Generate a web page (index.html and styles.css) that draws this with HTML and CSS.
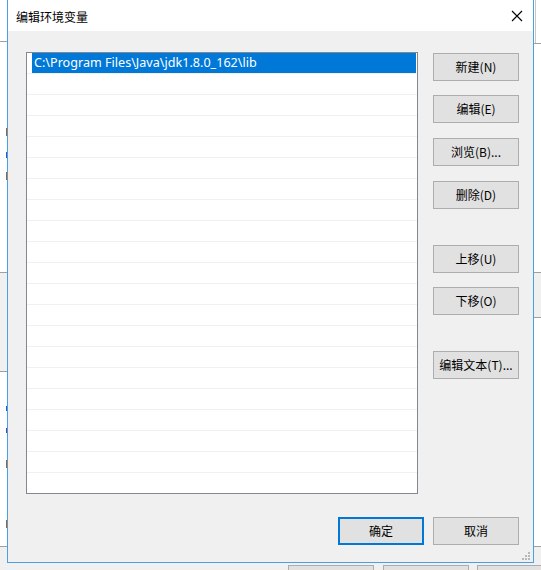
FILE: index.html
```html
<!DOCTYPE html>
<html lang="zh-CN">
<head>
<meta charset="utf-8">
<title>编辑环境变量</title>
<link rel="stylesheet" href="styles.css">
</head>
<body>
<div class="desktop">
  <div class="bg-window">
    <div class="bg-line l1"></div>
    <div class="bg-band b1"></div>
    <div class="bg-band b2"></div>
    <div class="bg-line r1"></div>
    <div class="bg-vline"></div>
    <div class="bg-band r2"></div>
    <div class="bg-btn k1"></div>
    <div class="bg-btn k2"></div>
    <div class="bg-btn k3"></div>
    <div class="frag f1"></div>
    <div class="frag f2"></div>
    <div class="frag f3"></div>
    <div class="frag f4"></div>
    <div class="frag f5"></div>
    <div class="frag f6"></div>
    <div class="frag f7"></div>
  </div>

  <div class="dialog">
    <div class="titlebar">
      <span class="title">编辑环境变量</span>
      <svg class="close" width="12" height="12" viewBox="0 0 12 12"><path d="M1 1 L11 11 M11 1 L1 11" stroke="#000" stroke-width="1.1" fill="none"/></svg>
    </div>
    <div class="body">
      <div class="main">
        <div class="list">
          <div class="row selected"><span class="item">C:\Program Files\Java\jdk1.8.0_162\lib</span></div>
          <div class="row"></div><div class="row"></div><div class="row"></div><div class="row"></div>
          <div class="row"></div><div class="row"></div><div class="row"></div><div class="row"></div>
          <div class="row"></div><div class="row"></div><div class="row"></div><div class="row"></div>
          <div class="row"></div><div class="row"></div><div class="row"></div><div class="row"></div>
          <div class="row"></div><div class="row"></div><div class="row"></div><div class="row"></div>
        </div>
        <div class="side">
          <button class="btn">新建(N)</button>
          <button class="btn g14">编辑(E)</button>
          <button class="btn g15">浏览(B)...</button>
          <button class="btn g15">删除(D)</button>
          <button class="btn g36">上移(U)</button>
          <button class="btn g14">下移(O)</button>
          <button class="btn g36">编辑文本(T)...</button>
        </div>
      </div>
      <div class="footer">
        <button class="btn primary">确定</button>
        <button class="btn">取消</button>
      </div>
      <svg class="grip" width="9" height="9" viewBox="0 0 9 9">
        <rect x="7" y="1" width="2" height="2" fill="#b8b8b8"/>
        <rect x="4" y="4" width="2" height="2" fill="#b8b8b8"/>
        <rect x="7" y="4" width="2" height="2" fill="#b8b8b8"/>
        <rect x="1" y="7" width="2" height="2" fill="#b8b8b8"/>
        <rect x="4" y="7" width="2" height="2" fill="#b8b8b8"/>
        <rect x="7" y="7" width="2" height="2" fill="#b8b8b8"/>
      </svg>
    </div>
  </div>
</div>
</body>
</html>
```
FILE: styles.css
```css
* { box-sizing: border-box; }
html, body { margin: 0; padding: 0; }
body {
  width: 541px;
  height: 570px;
  overflow: hidden;
  background: #ffffff;
  font-family: "Noto Sans CJK SC", "Noto Sans", sans-serif;
  font-size: 12px;
  color: #000;
}
.desktop { position: relative; width: 541px; height: 570px; overflow: hidden; }

.bg-window { position: absolute; inset: 0; background: #fff; }
.bg-line { position: absolute; height: 1px; background: #a0a0a0; }
.bg-line.l1 { left: 0; top: 41px; width: 8px; }
.bg-line.r1 { left: 534px; top: 43px; width: 8px; }
.bg-vline { position: absolute; left: 535px; top: 0; width: 1px; height: 43px; background: #c8c8c8; }
.bg-band { position: absolute; background: #f0f0f0; border-top: 1px solid #a0a0a0; }
.bg-band.b1 { left: 0; top: 272px; width: 8px; height: 100px; border-bottom: 1px solid #a0a0a0; }
.bg-band.b2 { left: 0; top: 546px; width: 541px; height: 30px; }
.bg-band.r2 { left: 534px; top: 272px; width: 8px; height: 46px; border-bottom: 1px solid #a0a0a0; }
.bg-btn { position: absolute; top: 565px; height: 24px; background: #e1e1e1; border: 1px solid #adadad; }
.bg-btn.k1 { left: 288px; width: 86px; }
.bg-btn.k2 { left: 383px; width: 86px; }
.bg-btn.k3 { left: 477px; width: 86px; }
.frag { position: absolute; width: 2px; height: 8px; background: #b85a12; }
.frag.f1 { left: 6px; top: 128px; }
.frag.f2 { left: 6px; top: 152px; background: #2a5ad0; height: 6px; }
.frag.f3 { left: 6px; top: 172px; }
.frag.f4 { left: 6px; top: 406px; background: #2a5ad0; height: 5px; }
.frag.f5 { left: 6px; top: 428px; background: #6a3aa0; height: 5px; }
.frag.f6 { left: 6px; top: 460px; }
.frag.f7 { left: 6px; top: 520px; }

.dialog {
  position: absolute;
  left: 7px;
  top: -1px;
  width: 527px;
  height: 564px;
  border: 1px solid #47a1e6;
  background: #f0f0f0;
  display: flex;
  flex-direction: column;
}
.titlebar {
  height: 31px;
  background: #fff;
  display: flex;
  align-items: center;
  justify-content: space-between;
  padding: 0 10px 0 8px;
  flex: none;
}
.title { font-size: 12px; line-height: 31px; padding-top: 1px; }
.close { display: block; margin-top: 1px; }

.body { position: relative; flex: 1; padding: 21px 0 0 18px; }
.main { display: flex; gap: 15px; align-items: flex-start; }
.list {
  width: 392px;
  height: 442px;
  border: 1px solid #828790;
  background: #fff;
  overflow: hidden;
}
.row {
  height: 21px;
  border-bottom: 1px solid #f0f0f0;
}
.row.selected { padding-left: 5px; padding-right: 1px; }
.item {
  display: block;
  height: 20px;
  line-height: 20px;
  background: #0078d7;
  color: #fff;
  padding-left: 2px;
  font-family: "Noto Sans", "Noto Sans CJK SC", sans-serif;
  font-size: 12.6px;
  white-space: nowrap;
}
.side { display: flex; flex-direction: column; padding-top: 1px; }
.btn {
  width: 86px;
  height: 28px;
  margin: 0;
  padding: 0 0 1px 0;
  background: #e1e1e1;
  border: 1px solid #adadad;
  font-family: "Noto Sans CJK SC", "Noto Sans", sans-serif;
  font-size: 12px;
  color: #000;
  display: flex;
  align-items: center;
  justify-content: center;
  white-space: nowrap;
}
.g14 { margin-top: 14px; }
.g15 { margin-top: 15px; }
.g36 { margin-top: 36px; }
.footer {
  display: flex;
  justify-content: flex-end;
  gap: 9px;
  padding-right: 14px;
  margin-top: 23px;
}
.btn.primary { border: 2px solid #0078d7; }
.grip { position: absolute; right: 3px; bottom: 2px; display: block; }
```
